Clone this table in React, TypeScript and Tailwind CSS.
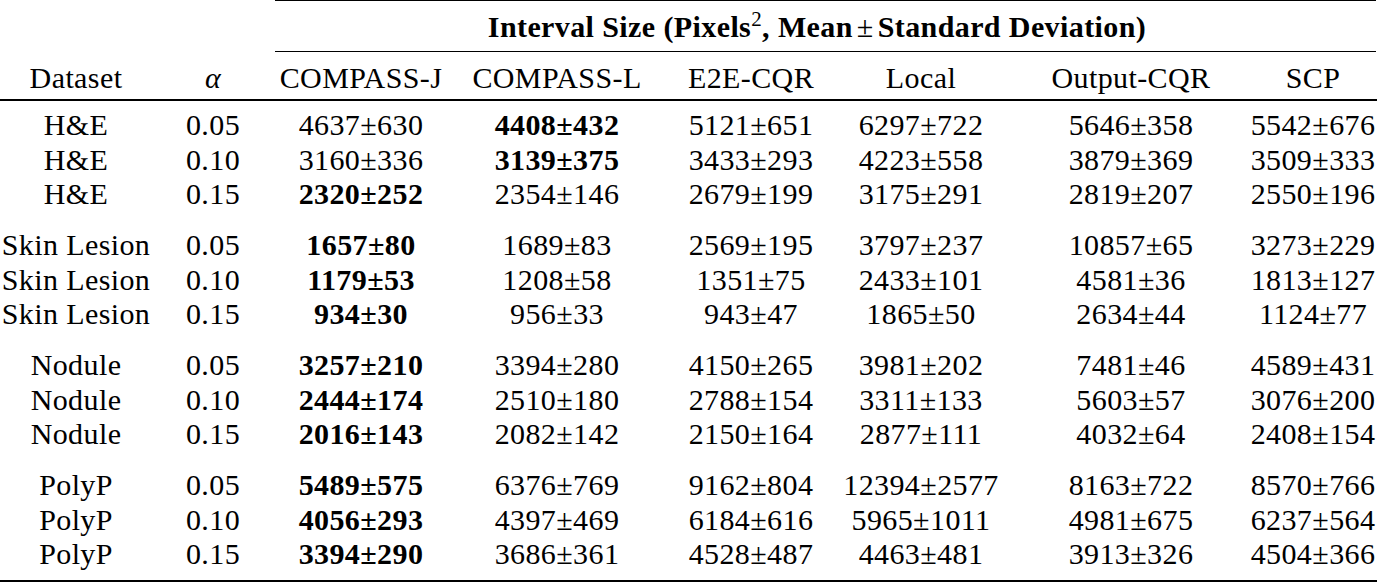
import React from "react";

type Cell = { v: string; b?: boolean };
type Row = { d: string; a: string; c: Cell[] };

const groups: Row[][] = [
  [
    { d: "H&E", a: "0.05", c: [{ v: "4637±630" }, { v: "4408±432", b: true }, { v: "5121±651" }, { v: "6297±722" }, { v: "5646±358" }, { v: "5542±676" }] },
    { d: "H&E", a: "0.10", c: [{ v: "3160±336" }, { v: "3139±375", b: true }, { v: "3433±293" }, { v: "4223±558" }, { v: "3879±369" }, { v: "3509±333" }] },
    { d: "H&E", a: "0.15", c: [{ v: "2320±252", b: true }, { v: "2354±146" }, { v: "2679±199" }, { v: "3175±291" }, { v: "2819±207" }, { v: "2550±196" }] },
  ],
  [
    { d: "Skin Lesion", a: "0.05", c: [{ v: "1657±80", b: true }, { v: "1689±83" }, { v: "2569±195" }, { v: "3797±237" }, { v: "10857±65" }, { v: "3273±229" }] },
    { d: "Skin Lesion", a: "0.10", c: [{ v: "1179±53", b: true }, { v: "1208±58" }, { v: "1351±75" }, { v: "2433±101" }, { v: "4581±36" }, { v: "1813±127" }] },
    { d: "Skin Lesion", a: "0.15", c: [{ v: "934±30", b: true }, { v: "956±33" }, { v: "943±47" }, { v: "1865±50" }, { v: "2634±44" }, { v: "1124±77" }] },
  ],
  [
    { d: "Nodule", a: "0.05", c: [{ v: "3257±210", b: true }, { v: "3394±280" }, { v: "4150±265" }, { v: "3981±202" }, { v: "7481±46" }, { v: "4589±431" }] },
    { d: "Nodule", a: "0.10", c: [{ v: "2444±174", b: true }, { v: "2510±180" }, { v: "2788±154" }, { v: "3311±133" }, { v: "5603±57" }, { v: "3076±200" }] },
    { d: "Nodule", a: "0.15", c: [{ v: "2016±143", b: true }, { v: "2082±142" }, { v: "2150±164" }, { v: "2877±111" }, { v: "4032±64" }, { v: "2408±154" }] },
  ],
  [
    { d: "PolyP", a: "0.05", c: [{ v: "5489±575", b: true }, { v: "6376±769" }, { v: "9162±804" }, { v: "12394±2577" }, { v: "8163±722" }, { v: "8570±766" }] },
    { d: "PolyP", a: "0.10", c: [{ v: "4056±293", b: true }, { v: "4397±469" }, { v: "6184±616" }, { v: "5965±1011" }, { v: "4981±675" }, { v: "6237±564" }] },
    { d: "PolyP", a: "0.15", c: [{ v: "3394±290", b: true }, { v: "3686±361" }, { v: "4528±487" }, { v: "4463±481" }, { v: "3913±326" }, { v: "4504±366" }] },
  ],
];

const cols = "grid grid-cols-[152px_122px_174px_218px_170px_170px_250px_114px]";
const cell = "min-w-0 flex justify-center whitespace-nowrap";

export default function App() {
  return (
    <div
      className="w-[1380px] h-[585px] bg-white text-black text-[30px] leading-[34.5px] tracking-[0.4px] overflow-hidden"
      style={{ fontFamily: '"Liberation Serif", "Times New Roman", serif' }}
    >
      <div className="w-[1377px]">
        {/* top rule */}
        <div className="ml-[275px] w-[1101px] border-t-[1.5px] border-black" />
        {/* spanning header */}
        <div className="ml-[268px] w-[1098px] h-[50px] flex items-center justify-center font-bold pt-[2px] whitespace-nowrap">
          <span>
            Interval Size (Pixels<sup className="font-normal text-[21px] relative top-[-11px] align-baseline">2</sup>, Mean
            <span className="font-normal mx-[4px]">±</span>Standard Deviation)
          </span>
        </div>
        {/* cmidrule */}
        <div className="ml-[275px] w-[1101px] border-t-[1.5px] border-black" />
        {/* column headers */}
        <div className={`${cols} h-[47px] items-center pt-[5px]`}>
          <div className={cell}>Dataset</div>
          <div className={`${cell} italic`}>α</div>
          <div className={cell}>COMPASS-J</div>
          <div className={cell}>COMPASS-L</div>
          <div className={cell}>E2E-CQR</div>
          <div className={cell}>Local</div>
          <div className={cell}>Output-CQR</div>
          <div className={cell}>SCP</div>
        </div>
        <div className="border-t-[2px] border-black" />
        <div className="pt-[7px] pb-[8px] flex flex-col gap-[16.5px]">
          {groups.map((g, gi) => (
            <div key={gi}>
              {g.map((r, ri) => (
                <div key={ri} className={`${cols} h-[34.5px] items-center`}>
                  <div className={cell}>{r.d}</div>
                  <div className={cell}>{r.a}</div>
                  {r.c.map((c, ci) => (
                    <div key={ci} className={`${cell} ${c.b ? "font-bold" : ""}`}>
                      {c.v}
                    </div>
                  ))}
                </div>
              ))}
            </div>
          ))}
        </div>
        <div className="border-t-[2px] border-black" />
      </div>
    </div>
  );
}
